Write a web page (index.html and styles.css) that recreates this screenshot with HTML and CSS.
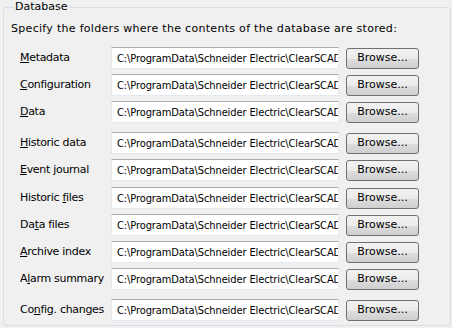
FILE: index.html
```html
<!DOCTYPE html>
<html lang="en">
<head>
    <meta charset="UTF-8">
    <title>Database</title>
    <link rel="stylesheet" href="styles.css">
</head>
<body>
    <fieldset class="group">
        <legend>Database</legend>
        <p class="intro">Specify the folders where the contents of the database are stored:</p>

        <div class="row">
            <label><u>M</u>etadata</label>
            <div class="path">C:\ProgramData\Schneider Electric\ClearSCADA\Metadata</div>
            <button type="button" class="browse">Browse...</button>
        </div>
        <div class="row">
            <label><u>C</u>onfiguration</label>
            <div class="path">C:\ProgramData\Schneider Electric\ClearSCADA\Configuration</div>
            <button type="button" class="browse">Browse...</button>
        </div>
        <div class="row">
            <label><u>D</u>ata</label>
            <div class="path">C:\ProgramData\Schneider Electric\ClearSCADA\Data</div>
            <button type="button" class="browse">Browse...</button>
        </div>
        <div class="row wide">
            <label><u>H</u>istoric data</label>
            <div class="path">C:\ProgramData\Schneider Electric\ClearSCADA\History</div>
            <button type="button" class="browse">Browse...</button>
        </div>
        <div class="row">
            <label><u>E</u>vent journal</label>
            <div class="path">C:\ProgramData\Schneider Electric\ClearSCADA\Journal</div>
            <button type="button" class="browse">Browse...</button>
        </div>
        <div class="row loose">
            <label>Historic <u>f</u>iles</label>
            <div class="path">C:\ProgramData\Schneider Electric\ClearSCADA\HistoricFiles</div>
            <button type="button" class="browse">Browse...</button>
        </div>
        <div class="row">
            <label>Da<u>t</u>a files</label>
            <div class="path">C:\ProgramData\Schneider Electric\ClearSCADA\DataFiles</div>
            <button type="button" class="browse">Browse...</button>
        </div>
        <div class="row">
            <label><u>A</u>rchive index</label>
            <div class="path">C:\ProgramData\Schneider Electric\ClearSCADA\Archive</div>
            <button type="button" class="browse">Browse...</button>
        </div>
        <div class="row">
            <label>A<u>l</u>arm summary</label>
            <div class="path">C:\ProgramData\Schneider Electric\ClearSCADA\AlarmSummary</div>
            <button type="button" class="browse">Browse...</button>
        </div>
        <div class="row wide">
            <label>Co<u>n</u>fig. changes</label>
            <div class="path">C:\ProgramData\Schneider Electric\ClearSCADA\ConfigChanges</div>
            <button type="button" class="browse">Browse...</button>
        </div>
    </fieldset>
</body>
</html>
```

FILE: styles.css
```css
/* Window background and default text */
body {
    margin: 0;
    background: #f0f0f0;
    font-family: "DejaVu Sans", sans-serif;
    font-size: 11px;
    line-height: 14px;
    color: #000000;
}

/* Group box */
.group {
    margin: 0 1px 2px 3px;
    padding: 8px 0 0 7px;
    border: 1px solid #d5dfe5;
    border-radius: 3px;
    box-sizing: border-box;
    height: 326px;
}

.group legend {
    margin-left: 3px;
    padding: 0 1px;
}

.intro {
    margin: 0 0 11px 0;
    letter-spacing: 0.3px;
}

/* One folder row */
.row {
    display: flex;
    align-items: center;
    height: 22px;
    margin-top: 5px;
}

.row:first-of-type {
    margin-top: 0;
}

.row.loose {
    margin-top: 6px;
}

.row.wide {
    margin-top: 9px;
}

.row label {
    width: 100px;
    padding-left: 9px;
    box-sizing: border-box;
    letter-spacing: -0.3px;
    white-space: nowrap;
    flex: none;
}

.path {
    width: 228px;
    height: 22px;
    padding: 4px 0 0 5px;
    box-sizing: border-box;
    background: #ffffff;
    border: 1px solid #e3e9ef;
    border-top-color: #abadb3;
    font-family: "DejaVu Sans Condensed", "DejaVu Sans", sans-serif;
    letter-spacing: -0.1px;
    white-space: nowrap;
    overflow: hidden;
    flex: none;
}

/* Browse button */
.browse {
    margin-left: 7px;
    width: 73px;
    height: 21px;
    padding: 0;
    font: inherit;
    color: #000000;
    border: 1px solid #707070;
    border-radius: 3px;
    background: linear-gradient(#f2f2f2 0%, #ebebeb 50%, #dddddd 51%, #cfcfcf 100%);
}
```
